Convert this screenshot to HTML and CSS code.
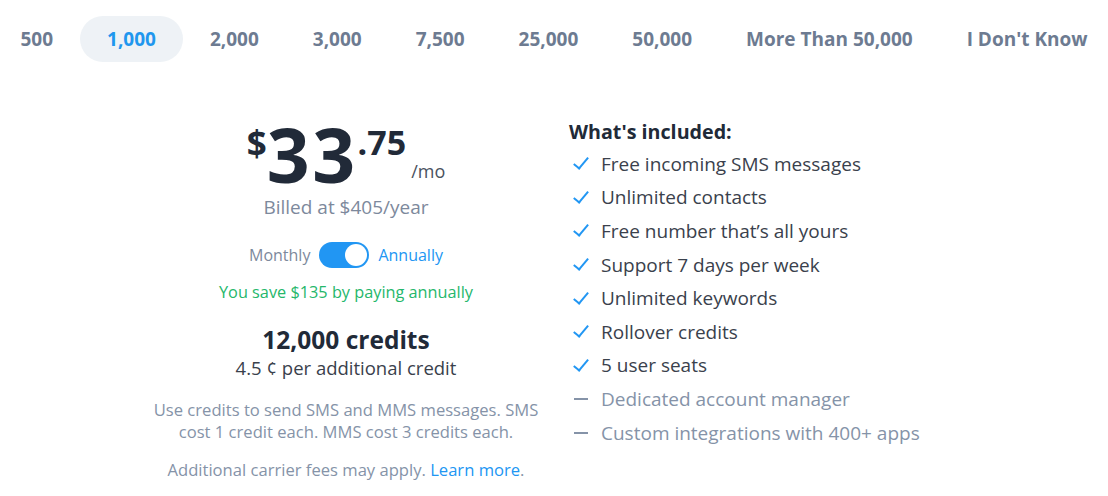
FILE: index.html
```html
<!DOCTYPE html>
<html lang="en">
<head>
    <meta charset="UTF-8">
    <meta name="viewport" content="width=device-width, initial-scale=1.0">
    <title>Pricing</title>
    <link rel="stylesheet" href="styles.css">
</head>
<body>

<!-- contact count tabs -->
<nav class="tabs">
    <span class="tab">500</span>
    <span class="tab active">1,000</span>
    <span class="tab">2,000</span>
    <span class="tab">3,000</span>
    <span class="tab">7,500</span>
    <span class="tab">25,000</span>
    <span class="tab">50,000</span>
    <span class="tab">More Than 50,000</span>
    <span class="tab">I Don't Know</span>
</nav>

<div class="plan">
    <!-- price column -->
    <div class="price-col">
        <div class="price">
            <span class="currency">$</span>
            <span class="amount">33</span>
            <span class="cents">.75</span>
            <span class="per">/mo</span>
        </div>
        <p class="billed">Billed at $405/year</p>

        <div class="billing-toggle">
            <span class="label">Monthly</span>
            <span class="switch"><span class="knob"></span></span>
            <span class="label on">Annually</span>
        </div>
        <p class="savings">You save $135 by paying annually</p>

        <p class="credits">12,000 credits</p>
        <p class="extra">4.5 &cent; per additional credit</p>

        <p class="note">Use credits to send SMS and MMS messages. SMS cost 1 credit each. MMS cost 3 credits each.</p>
        <p class="note fees">Additional carrier fees may apply. <a href="#">Learn more</a>.</p>
    </div>

    <!-- features column -->
    <div class="features">
        <h3>What's included:</h3>
        <ul>
            <li><span class="check"></span>Free incoming SMS messages</li>
            <li><span class="check"></span>Unlimited contacts</li>
            <li><span class="check"></span>Free number that’s all yours</li>
            <li><span class="check"></span>Support 7 days per week</li>
            <li><span class="check"></span>Unlimited keywords</li>
            <li><span class="check"></span>Rollover credits</li>
            <li><span class="check"></span>5 user seats</li>
            <li class="off"><span class="dash"></span>Dedicated account manager</li>
            <li class="off"><span class="dash"></span>Custom integrations with 400+ apps</li>
        </ul>
    </div>
</div>

</body>
</html>
```

FILE: styles.css
```css
body {
    margin: 0;
    font-family: "Open Sans", "Liberation Sans", sans-serif;
    background-color: #fff;
    color: #2b3340;
    overflow: hidden;
}
p {
    margin: 0;
}

/* tabs */
.tabs {
    display: flex;
    justify-content: center;
    padding-top: 16px;
    white-space: nowrap;
}
.tab {
    flex-shrink: 0;
    padding: 0 27px;
    height: 46px;
    line-height: 46px;
    border-radius: 23px;
    font-size: 19px;
    font-weight: 700;
    color: #6d7b91;
}
.tab.active {
    background-color: #eef2f6;
    color: #1f97ee;
}

/* layout */
.plan {
    display: flex;
    padding-left: 136px;
    margin-top: 56px;
}
.price-col {
    width: 420px;
    text-align: center;
}

/* price */
.price {
    display: flex;
    justify-content: center;
    align-items: flex-start;
    color: #212a38;
    font-weight: 700;
    height: 76px;
}
.currency {
    font-size: 35px;
    line-height: 40px;
    margin-top: 5px;
}
.amount {
    font-size: 75px;
    line-height: 70px;
    margin-top: 1px;
    letter-spacing: 2.5px;
}
.cents {
    font-size: 34px;
    line-height: 40px;
    margin-top: 4px;
}
.per {
    font-weight: 400;
    font-size: 18px;
    color: #4a5260;
    margin: 41px 0 0 5px;
}
.billed {
    font-size: 19px;
    color: #7d899c;
}

/* toggle */
.billing-toggle {
    display: flex;
    justify-content: center;
    align-items: center;
    gap: 9px;
    margin-top: 22px;
    font-size: 16px;
}
.label {
    color: #7d899c;
}
.label.on {
    color: #2196f3;
}
.switch {
    position: relative;
    width: 50px;
    height: 26px;
    border-radius: 13px;
    background-color: #2196f3;
}
.knob {
    position: absolute;
    right: 2px;
    top: 2px;
    width: 22px;
    height: 22px;
    border-radius: 50%;
    background-color: #fff;
}
.savings {
    color: #25b76b;
    font-size: 16.3px;
    margin-top: 13px;
}

/* credits */
.credits {
    font-size: 24.5px;
    font-weight: 700;
    color: #212a38;
    margin-top: 20px;
}
.extra {
    font-size: 18.5px;
    color: #3a414c;
    margin-top: -1px;
}
.note {
    font-size: 16.6px;
    line-height: 22px;
    color: #8593a8;
    margin: 19px auto 0;
    width: 400px;
}
.note.fees {
    margin-top: 16px;
}
.note a {
    color: #2196f3;
    text-decoration: none;
}

/* features */
.features {
    margin-left: 13px;
}
.features h3 {
    margin: 0 0 2px;
    font-size: 19.7px;
    font-weight: 700;
    color: #212a38;
}
.features ul {
    list-style: none;
    margin: 0;
    padding: 0;
}
.features li {
    display: flex;
    align-items: center;
    height: 33.6px;
    font-size: 19px;
    color: #3a414c;
}
.features li.off {
    color: #8593a8;
}
.check {
    flex-shrink: 0;
    width: 6px;
    height: 13px;
    margin: -4px 16px 0 8px;
    border-right: 2px solid #2196f3;
    border-bottom: 2px solid #2196f3;
    transform: rotate(40deg);
}
.dash {
    flex-shrink: 0;
    width: 14px;
    height: 2px;
    margin: 0 13px 0 5px;
    background-color: #8593a8;
}
```
